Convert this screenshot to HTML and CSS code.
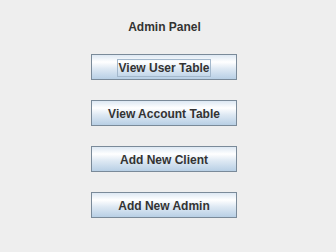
FILE: index.html
```html
<!DOCTYPE html>
<html>
<head>
<meta charset="utf-8">
<link rel="stylesheet" href="styles.css">
</head>
<body>
<div class="panel">
  <div class="title">Admin Panel</div>
  <div class="buttons">
    <button class="btn"><span class="focus">View User Table</span></button>
    <button class="btn"><span>View Account Table</span></button>
    <button class="btn"><span>Add New Client</span></button>
    <button class="btn"><span>Add New Admin</span></button>
  </div>
</div>
</body>
</html>
```
FILE: styles.css
```css
html, body {
  margin: 0;
  padding: 0;
  background: #eeeeee;
  width: 336px;
  height: 252px;
  overflow: hidden;
}
.panel {
  display: flex;
  flex-direction: column;
  width: 146px;
  margin-left: 91px;
  padding-top: 20px;
  font-family: "Liberation Sans", Arial, sans-serif;
  font-weight: bold;
  font-size: 12px;
  color: #333333;
}
.title {
  text-align: center;
  height: 15px;
  line-height: 15px;
  margin-left: 1px;
}
.buttons {
  margin-top: 19px;
  display: flex;
  flex-direction: column;
  gap: 20px;
}
.btn {
  box-sizing: border-box;
  width: 146px;
  height: 26px;
  border: 1px solid #7a8a99;
  padding: 1px 0 0 0;
  margin: 0;
  font: inherit;
  color: #333333;
  background: linear-gradient(to bottom, #dde8f3 0px, #ffffff 7px, #dde8f3 14px, #b8cfe5 24px);
  display: flex;
  align-items: center;
  justify-content: center;
}
.btn span {
  display: inline-block;
  line-height: 16px;
  padding: 0 1px;
  border: 1px solid transparent;
}
.btn span.focus {
  border-color: #a3b8cc;
}
```
